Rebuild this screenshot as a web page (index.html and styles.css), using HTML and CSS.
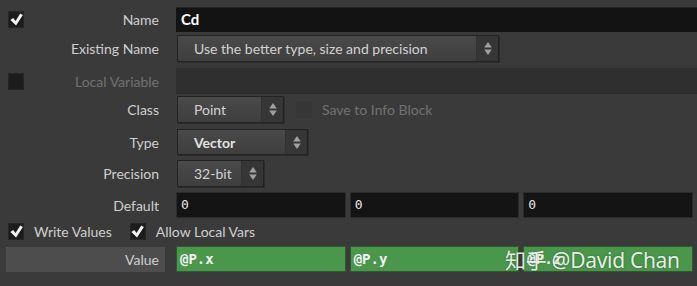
FILE: index.html
```html
<!DOCTYPE html>
<html lang="en">
  <head>
    <meta charset="UTF-8" />
    <title>Attribute Create</title>
    <link rel="stylesheet" href="styles.css">
  </head>
  <body>
    <div class="panel">
      <div class="row row-name">
        <div class="lead">
          <span class="check on">
            <svg viewBox="0 0 16 16"><path d="M1.5 8.5 L4.5 6.5 L7 9.5 L12 1.5 L14.8 3.2 L7.5 14.5 Z" /></svg>
          </span>
          <span class="label">Name</span>
        </div>
        <div class="text-field name-field">Cd</div>
      </div>

      <div class="row row-tall">
        <div class="lead"><span class="label">Existing Name</span></div>
        <div class="menu menu-existing">
          <span class="menu-text">Use the better type, size and precision</span>
          <span class="menu-arrow">
            <svg viewBox="0 0 8 14"><polygon points="4,0.5 7.8,6 0.2,6" /><polygon points="0.2,8 7.8,8 4,13.5" /></svg>
          </span>
        </div>
      </div>

      <div class="row row-local">
        <div class="lead">
          <span class="check"></span>
          <span class="label disabled">Local Variable</span>
        </div>
        <div class="text-field local-field"></div>
      </div>

      <div class="row row-tall">
        <div class="lead"><span class="label">Class</span></div>
        <div class="menu menu-class">
          <span class="menu-text">Point</span>
          <span class="menu-arrow">
            <svg viewBox="0 0 8 14"><polygon points="4,0.5 7.8,6 0.2,6" /><polygon points="0.2,8 7.8,8 4,13.5" /></svg>
          </span>
        </div>
        <span class="check off"></span>
        <span class="label disabled">Save to Info Block</span>
      </div>

      <div class="row row-type">
        <div class="lead"><span class="label">Type</span></div>
        <div class="menu menu-type">
          <span class="menu-text bold">Vector</span>
          <span class="menu-arrow">
            <svg viewBox="0 0 8 14"><polygon points="4,0.5 7.8,6 0.2,6" /><polygon points="0.2,8 7.8,8 4,13.5" /></svg>
          </span>
        </div>
      </div>

      <div class="row row-precision">
        <div class="lead"><span class="label">Precision</span></div>
        <div class="menu menu-precision">
          <span class="menu-text">32-bit</span>
          <span class="menu-arrow">
            <svg viewBox="0 0 8 14"><polygon points="4,0.5 7.8,6 0.2,6" /><polygon points="0.2,8 7.8,8 4,13.5" /></svg>
          </span>
        </div>
      </div>

      <div class="row row-default">
        <div class="lead"><span class="label">Default</span></div>
        <div class="vector">
          <div class="num-field">0</div>
          <div class="num-field">0</div>
          <div class="num-field">0</div>
        </div>
      </div>

      <div class="row row-toggles">
        <span class="check on">
          <svg viewBox="0 0 16 16"><path d="M1.5 8.5 L4.5 6.5 L7 9.5 L12 1.5 L14.8 3.2 L7.5 14.5 Z" /></svg>
        </span>
        <span class="toggle-label">Write Values</span>
        <span class="check on">
          <svg viewBox="0 0 16 16"><path d="M1.5 8.5 L4.5 6.5 L7 9.5 L12 1.5 L14.8 3.2 L7.5 14.5 Z" /></svg>
        </span>
        <span class="toggle-label">Allow Local Vars</span>
      </div>

      <div class="row row-value">
        <div class="lead lead-band"><span class="label">Value</span></div>
        <div class="vector">
          <div class="num-field expr">@P.x</div>
          <div class="num-field expr">@P.y</div>
          <div class="num-field expr">@P.z</div>
        </div>
      </div>

      <div class="watermark">知乎 @David Chan</div>
    </div>
  </body>
</html>
```

FILE: styles.css
```css
/* reset */
body {
  margin: 0;
  background-color: #3a3a3a;
  font-family: Lato, "Noto Sans", "Noto Sans CJK SC", sans-serif;
  font-size: 14px;
  color: #cfcfcf;
}

.panel {
  position: relative;
  width: 697px;
  height: 286px;
  padding-top: 7px;
  box-sizing: border-box;
  border-top: 5px solid #3d3d3d;
  margin-top: -5px;
}

.row {
  display: flex;
  align-items: center;
  height: 25px;
  margin-bottom: 3px;
}

.row-tall {
  height: 27px;
  margin-bottom: 6px;
}

.row-local {
  height: 26px;
  margin-bottom: 2px;
}

.row-type {
  height: 26px;
  margin-bottom: 5px;
}

.row-precision {
  height: 27px;
  margin-bottom: 5px;
}

.row-default {
  height: 26px;
  margin-bottom: 4px;
}

.row-toggles {
  height: 19px;
  margin-bottom: 5px;
  padding-left: 8px;
}

.row-value {
  height: 26px;
}

/* left column */
.lead {
  display: flex;
  align-items: center;
  width: 176px;
  height: 100%;
  padding: 0 17px 0 8px;
  box-sizing: border-box;
  flex: none;
}

.label {
  margin-left: auto;
  white-space: nowrap;
}

.disabled {
  color: #727272;
}

.lead-band {
  padding-left: 6px;
  padding-right: 11px;
}

.lead-band .label {
  width: 100%;
  height: 25px;
  line-height: 25px;
  text-align: right;
  padding-right: 6px;
  box-sizing: border-box;
  background-color: #4d4d4d;
}

/* checkboxes */
.check {
  display: flex;
  align-items: center;
  justify-content: center;
  width: 16px;
  height: 17px;
  background-color: #1c1c1c;
  box-shadow: inset 0 0 0 1px #262626;
  flex: none;
}

.check svg {
  width: 15px;
  height: 15px;
  fill: #f2f2f2;
}

.check.off {
  margin-left: 12px;
  background-color: #363636;
  box-shadow: none;
}

.check.off + .label {
  margin-left: 10px;
}

.toggle-label {
  margin: 0 18px 0 10px;
}

/* text fields */
.text-field {
  flex: 1;
  height: 100%;
  box-sizing: border-box;
}

.name-field {
  background-color: #131313;
  border-top: 1px solid #242424;
  padding-left: 5px;
  line-height: 23px;
  color: #fff;
  font-weight: bold;
  font-size: 15px;
}

.local-field {
  background-color: #2f2f2f;
  border-bottom: 1px solid #292929;
}

/* menus */
.menu {
  display: flex;
  height: 100%;
  margin-left: 1px;
  box-sizing: border-box;
  border: 1px solid #232323;
  background: linear-gradient(#4a4a4a, #3e3e3e);
  box-shadow: 1px 1px 0 #2c2c2c;
}

.menu-text {
  flex: 1;
  padding-left: 16px;
  line-height: 25px;
  color: #d2d2d2;
  white-space: nowrap;
}

.menu-text.bold {
  font-weight: bold;
  color: #e2e2e2;
}

.menu-arrow {
  display: flex;
  align-items: center;
  justify-content: center;
  width: 21px;
  background-color: #363636;
  border-left: 1px solid #333;
}

.menu-arrow svg {
  width: 8px;
  height: 15px;
  fill: #a0a0a0;
}

.menu-existing {
  width: 322px;
}

.menu-class {
  width: 107px;
}

.menu-type {
  width: 131px;
}

.menu-precision {
  width: 87px;
}

/* vector fields */
.vector {
  display: flex;
  gap: 4px;
  width: 517px;
  height: 100%;
}

.num-field {
  flex: 1;
  box-sizing: border-box;
  background-color: #141414;
  border: 1px solid #2b2b2b;
  padding-left: 4px;
  line-height: 24px;
  font-family: "DejaVu Sans Mono", monospace;
  font-size: 13px;
  color: #e6e6e6;
}

.num-field.expr {
  background-color: #4a964a;
  border-color: #2f5a2f;
  font-weight: bold;
  font-size: 14px;
  color: #f4f4f4;
  padding-left: 3px;
}

.watermark {
  position: absolute;
  left: 505px;
  top: 244px;
  font-family: "Noto Sans", "Noto Sans CJK SC", sans-serif;
  font-size: 21px;
  color: rgba(255, 255, 255, 0.9);
  text-shadow: 0 0 2px rgba(0, 0, 0, 0.35);
  letter-spacing: -0.3px;
}
```
